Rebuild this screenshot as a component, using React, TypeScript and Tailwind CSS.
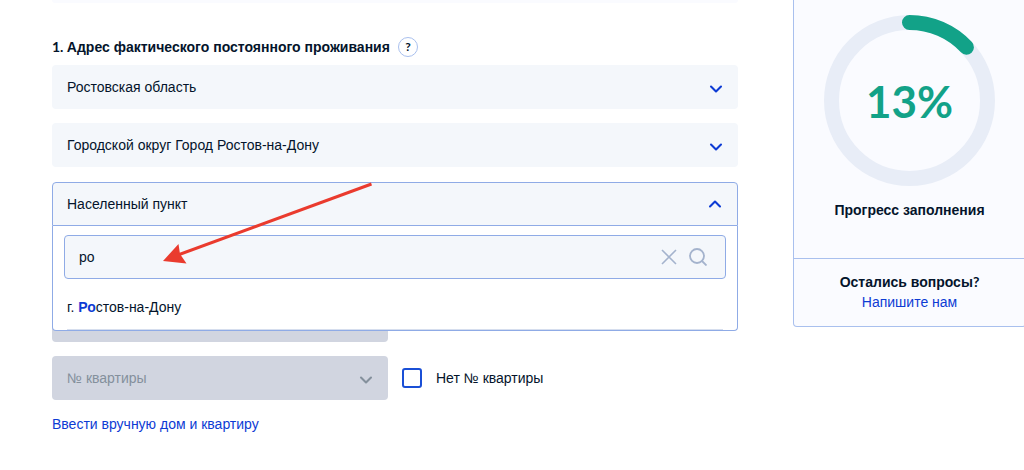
import { FC, ReactNode, useState } from "react";
import { ChevronDown, ChevronUp } from "lucide-react";

type SelectFieldProps = {
  label: string;
  value?: string;
  disabled?: boolean;
};

const SelectField: FC<SelectFieldProps> = (props) => {
  return (
    <div className="relative">
      <select
        aria-label={props.label}
        disabled={props.disabled}
        className="block h-11 w-full appearance-none rounded bg-[#f4f7fb] px-[15px] text-[#04142b] disabled:bg-[#d1d5e0] disabled:text-[#84909c] disabled:opacity-100"
      >
        <option>{props.value}</option>
      </select>
      <ChevronDown
        strokeWidth={2.5}
        className={
          props.disabled
            ? "pointer-events-none absolute top-[14px] right-3 size-5 text-[#84909c]"
            : "pointer-events-none absolute top-[14px] right-3 size-5 text-[#0d3bd4]"
        }
      />
    </div>
  );
};

const Num = (props: { children: ReactNode }) => (
  <span className="font-[Lato]">{props.children}</span>
);

const CityField = () => {
  const [query, setQuery] = useState("ро");

  return (
    <div className="relative z-10">
      <button
        type="button"
        aria-expanded="true"
        className="flex h-11 w-full items-center justify-between rounded-t border border-[#8fabe6] bg-[#f4f7fb] pr-3 pl-[14px] text-[#04142b]"
      >
        Населенный пункт
        <ChevronUp strokeWidth={2.5} className="size-5 text-[#0d3bd4]" />
      </button>

      <div className="absolute inset-x-0 top-full rounded-b border border-t-0 border-[#8fabe6] bg-white px-[11px] pt-[9px]">
        <div className="flex h-11 items-center gap-3 rounded-sm border border-[#8fabe6] bg-[#f4f7fb] pr-[18px] pl-[14px]">
          <input
            type="text"
            aria-label="Населенный пункт"
            value={query}
            onChange={(e) => setQuery(e.target.value)}
            className="min-w-0 flex-1 bg-transparent text-[#04142b] outline-none"
          />
          <button type="button" aria-label="Очистить" onClick={() => setQuery("")}>
            <svg viewBox="0 0 16 16" className="size-4" stroke="#a4b3cd" strokeWidth="1.6">
              <path d="M1 1l14 14M15 1L1 15" />
            </svg>
          </button>
          <button type="button" aria-label="Найти">
            <svg viewBox="0 0 18 18" className="size-[18px]" fill="none" stroke="#a4b3cd" strokeWidth="1.8">
              <circle cx="8" cy="8" r="7" />
              <path d="M12.500 12.500l5 5" />
            </svg>
          </button>
        </div>
        <ul className="px-[3px]">
          <li className="flex h-[51px] items-center border-b border-[#d6deee] pt-[5px] whitespace-pre text-[#04142b]">
            г. <b className="text-[#0d3bd4]">Ро</b>стов-на-Дону
          </li>
        </ul>
      </div>
    </div>
  );
};

const ProgressRing = (props: { percent: number }) => {
  const radius = 78;
  const length = 2 * Math.PI * radius;

  return (
    <div className="grid place-items-center">
      <svg viewBox="0 0 171 171" className="col-start-1 row-start-1 size-[171px]" fill="none">
        <circle cx="85.5" cy="85.5" r={radius} stroke="#e8edf7" strokeWidth="15" />
        <circle
          cx="85.5"
          cy="85.5"
          r={radius}
          stroke="#12a288"
          strokeWidth="15"
          strokeLinecap="round"
          strokeDasharray={`${(length * props.percent) / 100} ${length}`}
          transform="rotate(-90 85.5 85.5)"
        />
      </svg>
      <span className="col-start-1 row-start-1 font-[Lato] text-[44px] leading-none font-bold text-[#12a288]">
        {props.percent}%
      </span>
    </div>
  );
};

const Arrow = () => (
  <svg
    viewBox="0 0 212 82"
    className="pointer-events-none absolute top-[182px] left-[162px] z-20 w-[212px]"
  >
    <path d="M209.500 2L16 73" stroke="#ea3b2e" strokeWidth="3" />
    <path d="M1 79L16.500 62L18 72L24.500 81.500Z" fill="#ea3b2e" />
  </svg>
);

const App = () => {
  return (
    <div className="relative flex items-start gap-[55px] overflow-hidden bg-white pl-[52px] font-['Liberation_Sans',sans-serif] text-sm text-[#04142b]">
      <main className="min-w-0 flex-1 pb-9">
        <div className="h-[3px] rounded-b bg-[#fafbff]" />

        <div className="mt-[34px] flex h-5 items-center gap-2">
          <h2 className="font-bold">
            <Num>1. </Num>Адрес фактического постоянного проживания
          </h2>
          <button
            type="button"
            className="flex size-5 items-center justify-center rounded-full border border-[#a9c0ee] font-[Lato] text-xs font-bold"
          >
            ?
          </button>
        </div>

        <div className="mt-2 flex flex-col gap-[14px]">
          <SelectField label="Регион" value="Ростовская область" />
          <SelectField label="Район" value="Городской округ Город Ростов-на-Дону" />
          <div className="pt-px">
            <CityField />
          </div>
          <div className="w-[336px]">
            <SelectField label="Улица" disabled />
          </div>
          <div className="w-[336px]">
            <SelectField label="Дом" disabled />
          </div>
          <div className="flex items-center gap-[14px]">
            <div className="w-[336px]">
              <SelectField label="Квартира" value="№ квартиры" disabled />
            </div>
            <label className="flex items-center gap-[14px]">
              <input
                type="checkbox"
                className="size-5 appearance-none rounded-[3px] border-2 border-[#1a4fd6] bg-white checked:bg-[#1a4fd6]"
              />
              Нет № квартиры
            </label>
          </div>
        </div>

        <a href="#manual" className="mt-[14px] inline-block text-[#0d3bd4]">
          Ввести вручную дом и квартиру
        </a>
      </main>

      <aside className="-mr-[2px] w-[233px] shrink-0 rounded-b border border-t-0 border-[#a9c0ee] bg-[#fafbff] text-center">
        <section className="h-[259px] border-b border-[#a9c0ee] pt-[15px]">
          <ProgressRing percent={13} />
          <p className="mt-[14px] font-bold">Прогресс заполнения</p>
        </section>
        <section className="pt-[13px] pb-[14px]">
          <p className="font-bold">
            Остались вопросы<span className="font-[Lato]">?</span>
          </p>
          <a href="#support" className="text-[#0d3bd4]">
            Напишите нам
          </a>
        </section>
      </aside>

      <Arrow />
    </div>
  );
};

export default App;
